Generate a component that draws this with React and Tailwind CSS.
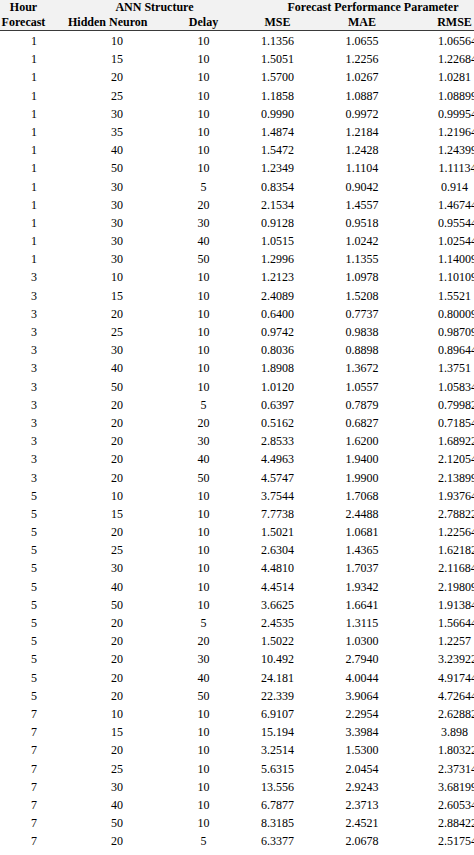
import React from 'react';

// hour, neurons, delay, mse, mae, rmse, hidden last digit (clipped at the edge)
const rows = [
  ['1', '10', '10', '1.1356', '1.0655', '1.0656', '4'],
  ['1', '15', '10', '1.5051', '1.2256', '1.2268', '4'],
  ['1', '20', '10', '1.5700', '1.0267', '1.0281', ''],
  ['1', '25', '10', '1.1858', '1.0887', '1.0889', '9'],
  ['1', '30', '10', '0.9990', '0.9972', '0.9995', '4'],
  ['1', '35', '10', '1.4874', '1.2184', '1.2196', '4'],
  ['1', '40', '10', '1.5472', '1.2428', '1.2439', '9'],
  ['1', '50', '10', '1.2349', '1.1104', '1.1113', '4'],
  ['1', '30', '5', '0.8354', '0.9042', '0.914', ''],
  ['1', '30', '20', '2.1534', '1.4557', '1.4674', '4'],
  ['1', '30', '30', '0.9128', '0.9518', '0.9554', '4'],
  ['1', '30', '40', '1.0515', '1.0242', '1.0254', '4'],
  ['1', '30', '50', '1.2996', '1.1355', '1.1400', '9'],
  ['3', '10', '10', '1.2123', '1.0978', '1.1010', '9'],
  ['3', '15', '10', '2.4089', '1.5208', '1.5521', ''],
  ['3', '20', '10', '0.6400', '0.7737', '0.8000', '9'],
  ['3', '25', '10', '0.9742', '0.9838', '0.9870', '9'],
  ['3', '30', '10', '0.8036', '0.8898', '0.8964', '4'],
  ['3', '40', '10', '1.8908', '1.3672', '1.3751', ''],
  ['3', '50', '10', '1.0120', '1.0557', '1.0583', '4'],
  ['3', '20', '5', '0.6397', '0.7879', '0.7998', '2'],
  ['3', '20', '20', '0.5162', '0.6827', '0.7185', '4'],
  ['3', '20', '30', '2.8533', '1.6200', '1.6892', '2'],
  ['3', '20', '40', '4.4963', '1.9400', '2.1205', '4'],
  ['3', '20', '50', '4.5747', '1.9900', '2.1389', '9'],
  ['5', '10', '10', '3.7544', '1.7068', '1.9376', '4'],
  ['5', '15', '10', '7.7738', '2.4488', '2.7882', '2'],
  ['5', '20', '10', '1.5021', '1.0681', '1.2256', '4'],
  ['5', '25', '10', '2.6304', '1.4365', '1.6218', '2'],
  ['5', '30', '10', '4.4810', '1.7037', '2.1168', '4'],
  ['5', '40', '10', '4.4514', '1.9342', '2.1980', '9'],
  ['5', '50', '10', '3.6625', '1.6641', '1.9138', '4'],
  ['5', '20', '5', '2.4535', '1.3115', '1.5664', '4'],
  ['5', '20', '20', '1.5022', '1.0300', '1.2257', ''],
  ['5', '20', '30', '10.492', '2.7940', '3.2392', '2'],
  ['5', '20', '40', '24.181', '4.0044', '4.9174', '4'],
  ['5', '20', '50', '22.339', '3.9064', '4.7264', '4'],
  ['7', '10', '10', '6.9107', '2.2954', '2.6288', '2'],
  ['7', '15', '10', '15.194', '3.3984', '3.898', ''],
  ['7', '20', '10', '3.2514', '1.5300', '1.8032', '2'],
  ['7', '25', '10', '5.6315', '2.0454', '2.3731', '4'],
  ['7', '30', '10', '13.556', '2.9243', '3.6819', '9'],
  ['7', '40', '10', '6.7877', '2.3713', '2.6053', '4'],
  ['7', '50', '10', '8.3185', '2.4521', '2.8842', '2'],
  ['7', '20', '5', '6.3377', '2.0678', '2.5175', '4'],
];

const cols = 'grid grid-cols-[68px_98px_75px_73px_96px_89px]';

export default function App() {
  return (
    <div className="w-[474px] h-[855px] overflow-hidden bg-white text-[12px] text-black text-center whitespace-nowrap font-['Liberation_Serif','Times_New_Roman',serif]">
      {/* Header */}
      <div className={`${cols} bg-[#f2f2f2] font-bold leading-[15px] border-b border-[#3a3a3a]`}>
        <div className="pr-[21px]">Hour</div>
        <div className="col-span-2">ANN Structure</div>
        <div className="col-span-3 pl-[6px]">Forecast Performance Parameter</div>
        <div className="pr-[21px]">Forecast</div>
        <div className="pr-[21px]">Hidden Neuron</div>
        <div>Delay</div>
        <div>MSE</div>
        <div>MAE</div>
        <div>RMSE</div>
      </div>

      {/* Body */}
      <div className={`${cols} pt-[1px] leading-[18.18px]`}>
        {rows.map((r, i) => (
          <React.Fragment key={i}>
            <div>{r[0]}</div>
            <div>{r[1]}</div>
            <div>{r[2]}</div>
            <div>{r[3]}</div>
            <div>{r[4]}</div>
            <div>
              {r[5]}
              <span className="inline-block w-0 text-left">{r[6]}</span>
            </div>
          </React.Fragment>
        ))}
      </div>
    </div>
  );
}
